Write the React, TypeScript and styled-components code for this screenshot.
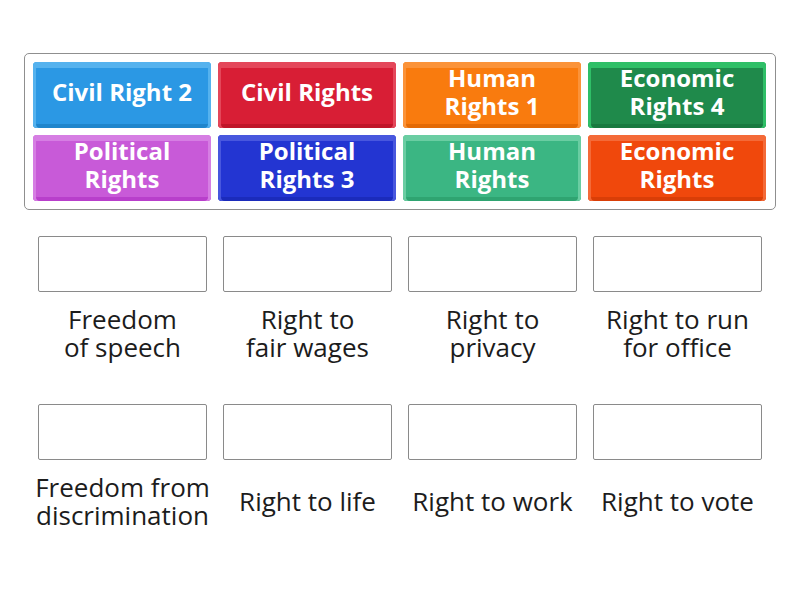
import React from "react";
import styled, { createGlobalStyle } from "styled-components";

const Global = createGlobalStyle`
  html, body { margin: 0; padding: 0; background: #fff; }
  body { font-family: "Open Sans", "Liberation Sans", sans-serif; }
`;

const Page = styled.div`
  width: 800px;
  height: 600px;
  padding: 53px 24px 0 24px;
  box-sizing: border-box;
`;

const Bank = styled.div`
  border: 1px solid #8f8f8f;
  border-radius: 5px;
  padding: 8px;
  display: grid;
  grid-template-columns: repeat(4, 178px);
  grid-auto-rows: 66px;
  column-gap: 7px;
  row-gap: 7px;
`;

const Tile = styled.div<{ $face: string; $rim: string; $dark: string }>`
  border-radius: 4px;
  background: ${(p) => p.$face};
  box-shadow: inset 0 6px 0 ${(p) => p.$rim}, inset 3px 0 0 ${(p) => p.$rim},
    inset -3px 0 0 ${(p) => p.$rim}, inset 0 -4px 0 ${(p) => p.$dark};
  color: #fff;
  font-weight: 700;
  font-size: 24px;
  line-height: 28px;
  display: flex;
  align-items: center;
  justify-content: center;
  text-align: center;
  padding-bottom: 7px;
  box-sizing: border-box;
`;

const Targets = styled.div`
  margin-top: 26px;
  padding-left: 14px;
  display: grid;
  grid-template-columns: repeat(4, 169px);
  column-gap: 16px;
  grid-auto-rows: 168px;
`;

const Cell = styled.div`
  display: flex;
  flex-direction: column;
  align-items: center;
`;

const Slot = styled.div`
  width: 169px;
  height: 56px;
  box-sizing: border-box;
  border: 1px solid #8a8a8a;
  border-radius: 2px;
  background: #fff;
`;

const Label = styled.div`
  width: 200px;
  height: 86px;
  display: flex;
  align-items: center;
  justify-content: center;
  text-align: center;
  font-size: 26px;
  line-height: 28px;
  color: #1c1c1c;
  padding-bottom: 4px;
  box-sizing: border-box;
`;

const tiles = [
  { t: ["Civil Right 2"], face: "#2b98e4", rim: "#55b2ee", dark: "#1f85cc" },
  { t: ["Civil Rights"], face: "#d81e35", rim: "#e4475a", dark: "#c01529" },
  { t: ["Human", "Rights 1"], face: "#f97b0e", rim: "#fb9339", dark: "#e36a05" },
  { t: ["Economic", "Rights 4"], face: "#1f8a4b", rim: "#2fbf67", dark: "#187a40" },
  { t: ["Political", "Rights"], face: "#c85ad8", rim: "#d67ee3", dark: "#b83fcb" },
  { t: ["Political", "Rights 3"], face: "#2335d2", rim: "#4857de", dark: "#1b2bbb" },
  { t: ["Human", "Rights"], face: "#3bb683", rim: "#6acda2", dark: "#2fa471" },
  { t: ["Economic", "Rights"], face: "#f0480c", rim: "#f46a38", dark: "#d93e07" },
];

const labels = [
  ["Freedom", "of speech"],
  ["Right to", "fair wages"],
  ["Right to", "privacy"],
  ["Right to run", "for office"],
  ["Freedom from", "discrimination"],
  ["Right to life"],
  ["Right to work"],
  ["Right to vote"],
];

export default function App() {
  return (
    <>
      <Global />
      <Page>
        <Bank>
          {tiles.map((x, i) => (
            <Tile key={i} $face={x.face} $rim={x.rim} $dark={x.dark}>
              <span>
                {x.t.map((l, j) => (
                  <React.Fragment key={j}>
                    {j > 0 && <br />}
                    {l}
                  </React.Fragment>
                ))}
              </span>
            </Tile>
          ))}
        </Bank>
        <Targets>
          {labels.map((l, i) => (
            <Cell key={i}>
              <Slot />
              <Label>
                <span>
                  {l.map((s, j) => (
                    <React.Fragment key={j}>
                      {j > 0 && <br />}
                      {s}
                    </React.Fragment>
                  ))}
                </span>
              </Label>
            </Cell>
          ))}
        </Targets>
      </Page>
    </>
  );
}
